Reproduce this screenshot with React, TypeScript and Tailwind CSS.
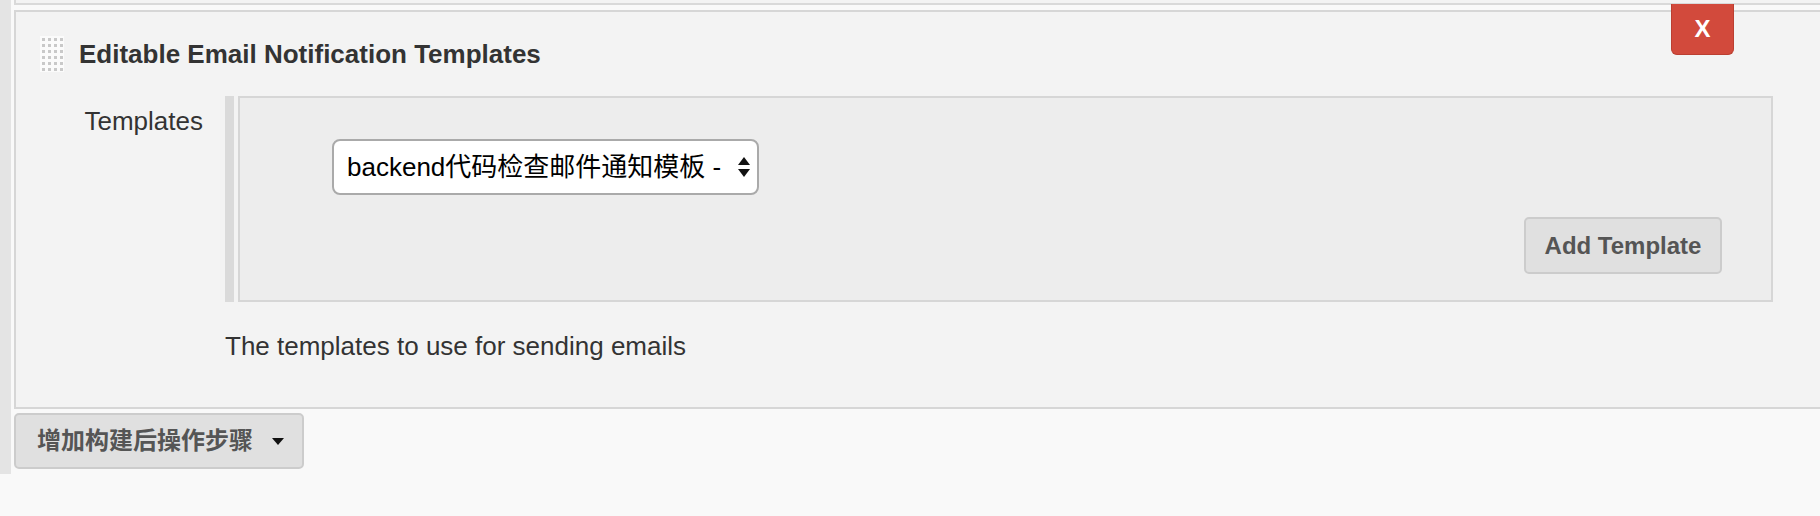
import React from "react";

// Dotted drag handle shown at the left of a section header
const DragHandle = () => {
  const dots = [];
  for (let r = 0; r < 6; r++) {
    for (let c = 0; c < 4; c++) {
      dots.push(<rect key={`${r}-${c}`} x={2 + c * 6} y={2 + r * 6} width={3} height={3} fill="#c9c9c9" />);
    }
  }
  return (
    <svg width="24" height="36" viewBox="0 0 24 36" className="shrink-0">
      <rect width="24" height="36" fill="#fbfbfb" />
      {dots}
    </svg>
  );
};

const SelectArrows = () => (
  <svg width="14" height="22" viewBox="0 0 14 22" className="shrink-0">
    <path d="M7 1 L13 9 L1 9 Z" fill="#111" />
    <path d="M7 21 L13 13 L1 13 Z" fill="#111" />
  </svg>
);

const App = () => {
  return (
    <div className="h-[516px] w-full overflow-hidden bg-[#f9f9f9] font-['Liberation_Sans','Noto_Sans_CJK_SC',sans-serif] text-[#333]">
      <div className="flex">
        {/* Left gutter bar */}
        <div className="h-[474px] w-[11px] shrink-0 bg-[#e4e4e4]" />

        <div className="ml-[3px] flex-1">
          {/* Bottom edge of the previous section */}
          <div className="h-[5px] border-b-2 border-l-2 border-[#d9d9d9] bg-[#f3f3f3]" />

          {/* Section panel */}
          <div className="relative mt-[5px] border-2 border-r-0 border-[#d6d6d6] bg-[#f3f3f3] pt-[24px] pb-[46px]">
            <button className="absolute left-[1655px] top-[-8px] flex h-[51px] w-[63px] items-center justify-center rounded-b-[6px] border border-t-0 border-[#bb3f31] bg-[#d24a3c] text-[24px] font-bold text-white">
              X
            </button>

            <div className="flex h-[36px] items-center pl-[24px]">
              <DragHandle />
              <h2 className="ml-[15px] text-[26px] font-bold leading-[30px] text-[#333]">
                Editable Email Notification Templates
              </h2>
            </div>

            <div className="mt-[24px] flex">
              <div className="w-[209px] shrink-0 pr-[22px] pt-[10px] text-right text-[26px] leading-[30px]">
                Templates
              </div>

              <div className="mr-[47px] flex-1">
                <div className="flex">
                  <div className="w-[9px] shrink-0 bg-[#dadada]" />
                  <div className="ml-[4px] flex-1 border-2 border-[#d6d6d6] bg-[#ededed] pt-[41px] pr-[49px] pb-[26px] pl-[92px]">
                    <div className="flex h-[56px] w-[427px] items-center justify-between rounded-[8px] border-2 border-[#aaaaaa] bg-white pl-[13px] pr-[6px] text-[26px] leading-[30px] text-black">
                      <span className="whitespace-nowrap">backend代码检查邮件通知模板 -</span>
                      <SelectArrows />
                    </div>
                    <div className="mt-[22px] flex justify-end">
                      <button className="h-[57px] w-[198px] rounded-[5px] border-2 border-[#cccccc] bg-[#e0e0e0] text-[24px] font-bold text-[#555]">
                        Add Template
                      </button>
                    </div>
                  </div>
                </div>

                <p className="mt-[29px] text-[26px] leading-[30px] text-[#333]">
                  The templates to use for sending emails
                </p>
              </div>
            </div>
          </div>

          {/* Add post-build step dropdown button */}
          <button className="mt-[4px] flex h-[56px] w-[290px] items-center rounded-[5px] border-2 border-[#cccccc] bg-[#e0e0e0] pl-[21px] text-[24px] font-bold text-[#555]">
            <span className="whitespace-nowrap">增加构建后操作步骤</span>
            <svg width="12" height="7" viewBox="0 0 12 7" className="ml-[19px]">
              <path d="M0 0 L12 0 L6 7 Z" fill="#111" />
            </svg>
          </button>
        </div>
      </div>
    </div>
  );
};

export default App;
